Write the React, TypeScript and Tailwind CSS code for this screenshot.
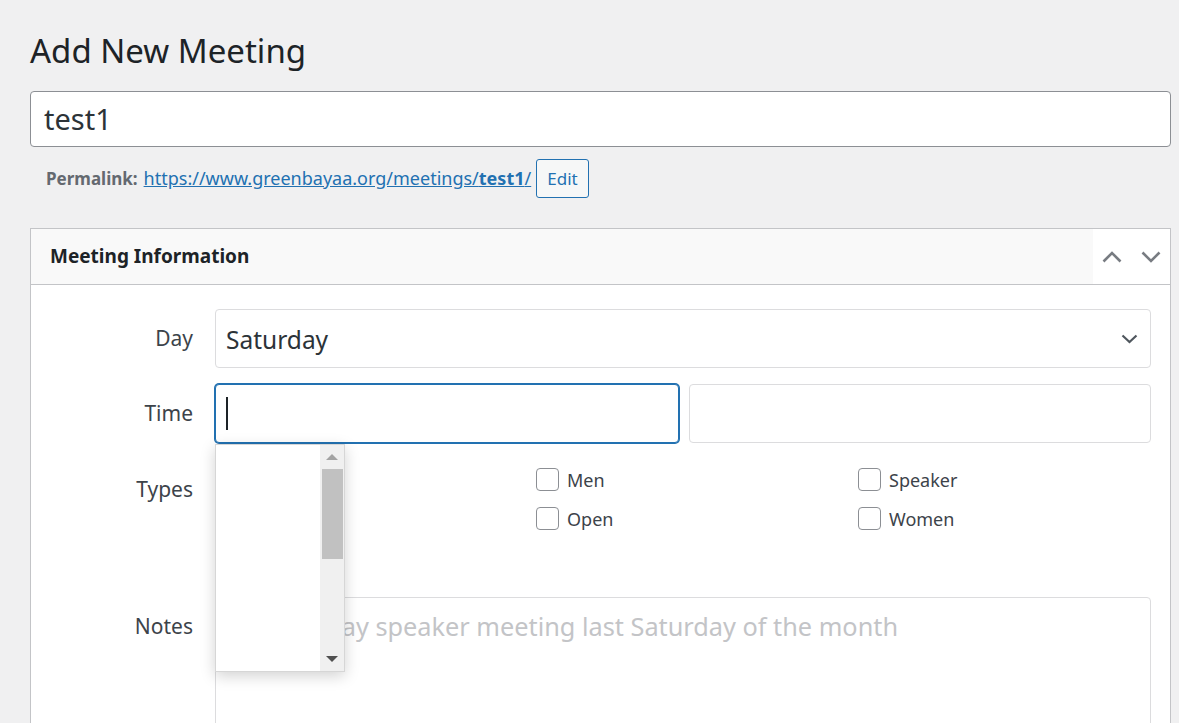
import React from "react";

function ChevronUp({ className }: { className?: string }) {
  return (
    <svg width="20" height="12" viewBox="0 0 20 12" className={className} fill="none">
      <path d="M1.5 10.5 L10 2 L18.5 10.5" stroke="#787c82" strokeWidth="2.6" />
    </svg>
  );
}
function ChevronDown({ className, color = "#787c82", w = 20, h = 12, sw = 2.6 }: { className?: string; color?: string; w?: number; h?: number; sw?: number }) {
  return (
    <svg width={w} height={h} viewBox={`0 0 ${w} ${h}`} className={className} fill="none">
      <path d={`M1.5 1.5 L${w / 2} ${h - 2} L${w - 1.5} 1.5`} stroke={color} strokeWidth={sw} />
    </svg>
  );
}

function Check({ label }: { label: string }) {
  return (
    <div className="flex items-center h-[39px]">
      <span className="w-[23px] h-[23px] border border-[#8c8f94] rounded-[4px] bg-white shrink-0" />
      <span className="ml-[8px] text-[18px] text-[#3c434a] leading-none">{label}</span>
    </div>
  );
}

export default function App() {
  return (
    <div className="w-full h-[723px] overflow-hidden bg-[#f0f0f1] pl-[30px] pr-[8px] font-['Noto_Sans',sans-serif]">
      <h1 className="pt-[29px] text-[33px] leading-[44px] font-normal text-[#1d2327]">Add New Meeting</h1>

      <div className="mt-[18px] h-[56px] border border-[#8c8f94] rounded-[4px] bg-white px-[13px] flex items-center text-[29px] text-[#2c3338]">
        test1
      </div>

      <div className="mt-[12px] h-[39px] flex items-center pl-[16px] text-[17px]">
        <span className="font-bold text-[#646970]">Permalink:</span>
        <a href="#" className="ml-[6px] text-[18px] text-[#2271b1] underline">
          https://www.greenbayaa.org/meetings/<b>test1</b>/
        </a>
        <button className="ml-[5px] h-[39px] px-[10px] border border-[#2271b1] rounded-[3px] bg-[#f6f7f7] text-[#2271b1] text-[17px]">
          Edit
        </button>
      </div>

      <div className="mt-[30px] border border-[#c3c4c7] bg-white">
        <div className="h-[56px] flex border-b border-[#c3c4c7]">
          <div className="flex-1 bg-[#f9f9f9] pl-[19px] flex items-center text-[19px] font-bold text-[#1d2327]">
            Meeting Information
          </div>
          <div className="w-[77px] flex items-center justify-center gap-[19px]">
            <ChevronUp />
            <ChevronDown />
          </div>
        </div>

        <div className="pt-[24px] pr-[19px] h-[500px]">
          <div className="flex items-center">
            <div className="w-[184px] pr-[22px] text-right text-[21px] text-[#3c434a]">Day</div>
            <div className="flex-1 h-[59px] border border-[#dcdcde] rounded-[4px] pl-[10px] pr-[12px] flex items-center justify-between text-[24.5px] text-[#2c3338]">
              <span className="mt-[4px]">Saturday</span>
              <ChevronDown color="#50575e" w={17} h={10} sw={2.2} />
            </div>
          </div>

          <div className="mt-[16px] flex items-center">
            <div className="w-[184px] pr-[22px] text-right text-[21px] text-[#3c434a]">Time</div>
            <div className="relative w-[464px] h-[59px]">
              <div className="w-full h-full border border-[#2271b1] shadow-[0_0_0_1px_#2271b1] rounded-[4px] bg-white flex items-center">
                <span className="ml-[10px] w-[2px] h-[33px] bg-[#1d2327]" />
              </div>
              <div className="absolute left-0 top-[60px] w-[130px] h-[228px] bg-white border border-[#d6d6d6] shadow-[0_4px_14px_rgba(0,0,0,0.18)] flex z-10">
                <div className="flex-1 bg-white" />
                <div className="w-[24px] bg-[#f0f0f0] flex flex-col items-center">
                  <div className="h-[24px] flex items-center justify-center">
                    <span className="w-0 h-0 border-l-[6px] border-r-[6px] border-b-[6px] border-l-transparent border-r-transparent border-b-[#a3a3a3]" />
                  </div>
                  <div className="w-[21px] h-[90px] bg-[#c1c1c1]" />
                  <div className="flex-1" />
                  <div className="h-[24px] flex items-center justify-center">
                    <span className="w-0 h-0 border-l-[6px] border-r-[6px] border-t-[6px] border-l-transparent border-r-transparent border-t-[#505050]" />
                  </div>
                </div>
              </div>
            </div>
            <div className="ml-[10px] flex-1 h-[59px] border border-[#dcdcde] rounded-[4px] bg-white" />
          </div>

          <div className="mt-[17px] flex items-start">
            <div className="w-[184px] pr-[22px] pt-[14px] text-right text-[21px] leading-[30px] text-[#3c434a]">Types</div>
            <div className="grid grid-cols-[321px_322px_1fr]">
              <div className="pl-[4px]">
                <Check label="Closed" />
                <Check label="Discussion" />
              </div>
              <div>
                <Check label="Men" />
                <Check label="Open" />
              </div>
              <div>
                <Check label="Speaker" />
                <Check label="Women" />
              </div>
            </div>
          </div>

          <div className="mt-[59px] flex items-start">
            <div className="w-[184px] pr-[22px] pt-[14px] text-right text-[21px] leading-[30px] text-[#3c434a]">Notes</div>
            <div className="flex-1 h-[200px] border border-[#dcdcde] rounded-[4px] pl-[52px] pt-[12px] text-[25.3px] leading-[32px] text-[#c3c4c7]">
              Birthday speaker meeting last Saturday of the month
            </div>
          </div>
        </div>
      </div>
    </div>
  );
}
